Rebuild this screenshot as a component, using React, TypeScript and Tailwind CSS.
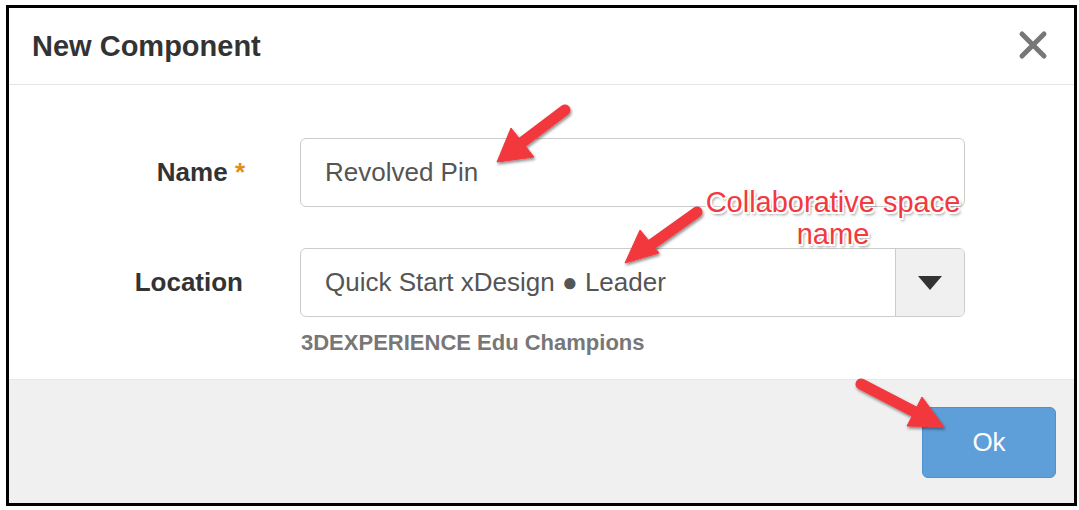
function Arrows() {
  return (
    <svg className="pointer-events-none absolute inset-0" width="1079" height="510" viewBox="0 0 1079 510">
      <defs>
        <filter id="shadow" x="-20%" y="-20%" width="140%" height="140%">
          <feDropShadow dx="1" dy="2" stdDeviation="1.6" floodColor="#000" floodOpacity="0.45" />
        </filter>
      </defs>
      <g fill="#f2393e" stroke="#f2393e" filter="url(#shadow)">
        <line x1="565" y1="110" x2="520" y2="144" strokeWidth="11" strokeLinecap="round" />
        <polygon points="497,162 511,128 534,157" strokeWidth="1" strokeLinejoin="round" />
        <line x1="697" y1="212" x2="648" y2="247" strokeWidth="11" strokeLinecap="round" />
        <polygon points="625,263 640,230 659,253" strokeWidth="1" strokeLinejoin="round" />
        <line x1="861" y1="384" x2="915" y2="412" strokeWidth="11" strokeLinecap="round" />
        <polygon points="944,427 922,397 907,426" strokeWidth="1" strokeLinejoin="round" />
      </g>
    </svg>
  )
}

export default function App() {
  return (
    <div className="relative h-[510px] w-[1079px] bg-white font-['Liberation_Sans',Arial,sans-serif]">
      <div className="absolute left-[6px] top-[5px] flex h-[501px] w-[1071px] flex-col border-[3px] border-black bg-white">
        <div className="flex h-[77px] items-center justify-between border-b border-[#e5e5e5] pl-[23px] pr-[26px]">
          <h3 className="text-[29px] font-bold leading-none text-[#333]">New Component</h3>
          <svg width="30" height="30" viewBox="0 0 30 30" className="mt-[-2px]">
            <path d="M4 4 L26 26 M26 4 L4 26" stroke="#777" strokeWidth="5" strokeLinecap="round" />
          </svg>
        </div>

        <div className="flex-1 pt-[53px]">
          <div className="flex items-center">
            <label className="w-[236px] text-right text-[26px] font-bold text-[#333]">
              Name <span className="text-[#e38d13]">*</span>
            </label>
            <div className="ml-[55px] flex h-[69px] w-[665px] items-center rounded-[6px] border border-[#ccc] pl-[24px] text-[26px] text-[#555]">
              Revolved Pin
            </div>
          </div>

          <div className="mt-[41px] flex items-center">
            <label className="w-[234px] text-right text-[26px] font-bold text-[#333]">Location</label>
            <div className="ml-[57px] flex h-[69px] w-[665px] overflow-hidden rounded-[6px] border border-[#ccc]">
              <div className="flex flex-1 items-center pl-[24px] text-[26px] text-[#555]">
                Quick Start xDesign ● Leader
              </div>
              <div className="flex w-[69px] items-center justify-center border-l border-[#ccc] bg-[#f0f0f0]">
                <svg width="24" height="14" viewBox="0 0 24 14">
                  <polygon points="0,0 24,0 12,14" fill="#333" />
                </svg>
              </div>
            </div>
          </div>
          <p className="ml-[292px] mt-[13px] text-[22px] font-bold leading-[26px] text-[#777]">
            3DEXPERIENCE Edu Champions
          </p>
        </div>

        <div className="flex h-[124px] items-start justify-end border-t border-[#e8e8e8] bg-[#f0f0f0] pr-[18px] pt-[27px]">
          <button className="h-[71px] w-[134px] rounded-[6px] border border-[#4f90cf] bg-[#5e9fda] text-[26px] text-white">
            Ok
          </button>
        </div>
      </div>

      <div className="absolute left-[697px] top-[186px] w-[272px] text-center text-[29px] leading-[32px] text-[#f2393e] [text-shadow:-1.5px_-1.5px_0_#fff,1.5px_-1.5px_0_#fff,-1.5px_1.5px_0_#fff,1.5px_1.5px_0_#fff,2px_3px_3px_rgba(0,0,0,0.45)]">
        Collaborative space
        <br />
        name
      </div>

      <Arrows />
    </div>
  )
}
